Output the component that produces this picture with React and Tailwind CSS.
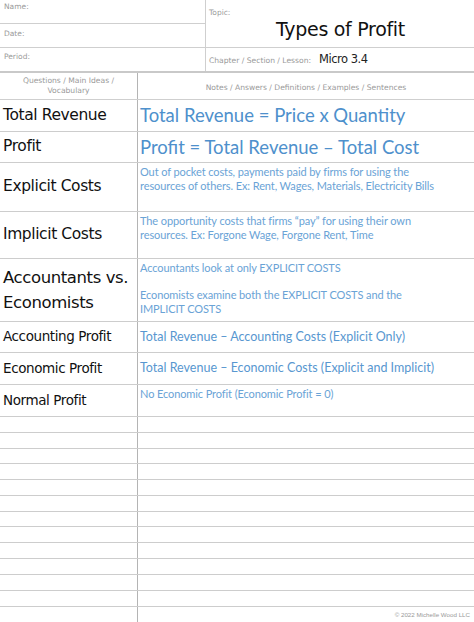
import React from 'react'

const gothic = "font-['DejaVu_Sans',sans-serif]"
const calibri = "font-['Lato','Open_Sans',sans-serif]"

const rows = [
  { h: 'h-[32px]', label: 'Total Revenue', labelSize: 'text-[15.5px]', body: ['Total Revenue = Price x Quantity'], kind: 'big' },
  { h: 'h-[31px]', label: 'Profit', labelSize: 'text-[15.5px]', body: ['Profit = Total Revenue – Total Cost'], kind: 'big' },
  {
    h: 'h-[49px]',
    label: 'Explicit Costs',
    labelSize: 'text-[15.5px]',
    body: ['Out of pocket costs, payments paid by firms for using the', 'resources of others. Ex: Rent, Wages, Materials, Electricity Bills'],
    kind: 'small',
  },
  {
    h: 'h-[47px]',
    label: 'Implicit Costs',
    labelSize: 'text-[15.5px]',
    body: ['The opportunity costs that firms “pay” for using their own', 'resources. Ex: Forgone Wage, Forgone Rent, Time'],
    kind: 'small',
  },
  {
    h: 'h-[63px]',
    label: ['Accountants vs.', 'Economists'],
    labelSize: 'text-[16.5px]',
    body: ['Accountants look at only EXPLICIT COSTS', '\u00a0', 'Economists examine both the EXPLICIT COSTS and the', 'IMPLICIT COSTS'],
    kind: 'small',
  },
  { h: 'h-[31px]', label: 'Accounting Profit', labelSize: 'text-[13.5px]', body: ['Total Revenue – Accounting Costs (Explicit Only)'], kind: 'mid' },
  { h: 'h-[32px]', label: 'Economic Profit', labelSize: 'text-[13.5px]', body: ['Total Revenue – Economic Costs (Explicit and Implicit)'], kind: 'mid' },
  { h: 'h-[32px]', label: 'Normal Profit', labelSize: 'text-[13.5px]', body: ['No Economic Profit (Economic Profit = 0)'], kind: 'small' },
]

// blank ruled lines under the notes, spacing is a hair under 16px
const blankRows = ['h-[16px]', 'h-[16px]', 'h-[15px]', 'h-[16px]', 'h-[16px]', 'h-[16px]', 'h-[15px]', 'h-[16px]', 'h-[16px]', 'h-[16px]', 'h-[16px]', 'h-[16px]']

function Body({ kind, lines }) {
  if (kind === 'big') {
    return <div className={`${calibri} text-[18.5px] text-[#4e90cc] px-[2px] self-center leading-none`}>{lines[0]}</div>
  }
  if (kind === 'mid') {
    return <div className={`${calibri} text-[12.5px] text-[#5897d0] px-[2px] self-center leading-none`}>{lines[0]}</div>
  }
  return (
    <div className={`${calibri} text-[11px] leading-[13.5px] text-[#6aa3d6] px-[2px] pt-[2px] tracking-[-0.1px]`}>
      {lines.map((l, i) => (
        <div key={i}>{l}</div>
      ))}
    </div>
  )
}

const App = () => {
  return (
    <div className={`w-[474px] h-[622px] bg-white overflow-hidden flex flex-col ${gothic}`}>
      {/* Header */}
      <div className="flex h-[73px] border-b-2 border-[#c9c9c9] shrink-0">
        <div className="w-[206px] flex flex-col border-r border-[#cfcfcf] text-[7.5px] text-[#9a9a9a]">
          <div className="h-[24px] border-b border-[#cfcfcf] px-[4px] pt-[1px]">Name:</div>
          <div className="h-[24px] border-b border-[#cfcfcf] px-[4px] pt-[4px]">Date:</div>
          <div className="flex-1 px-[4px] pt-[3px]">Period:</div>
        </div>
        <div className="flex-1 flex flex-col">
          <div className="h-[48px] border-b border-[#cfcfcf] flex">
            <div className="text-[7.5px] text-[#9a9a9a] pl-[3px] pt-[7px] w-[60px]">Topic:</div>
            <div className="text-[19px] text-[#111] pt-[15px] pl-[10px] tracking-[-0.3px]">Types of Profit</div>
          </div>
          <div className="flex-1 flex items-center px-[3px] gap-[8px]">
            <span className="text-[7.6px] text-[#9a9a9a] mt-[3px]">Chapter / Section / Lesson:</span>
            <span className="text-[11.5px] text-[#222] tracking-[-0.5px]">Micro 3.4</span>
          </div>
        </div>
      </div>

      {/* Column headings */}
      <div className="flex h-[27px] border-b border-[#cfcfcf] shrink-0 text-[7.6px] text-[#9a9a9a]">
        <div className="w-[138px] border-r border-[#b4b4b4] flex flex-col items-center justify-center leading-[10px] text-center">
          <div>Questions / Main Ideas /</div>
          <div>Vocabulary</div>
        </div>
        <div className="flex-1 flex items-center justify-center pt-[3px]">
          Notes / Answers / Definitions / Examples / Sentences
        </div>
      </div>

      {/* Content rows */}
      {rows.map((r, i) => (
        <div key={i} className={`flex ${r.h} border-b border-[#cdcdcd] shrink-0`}>
          <div
            className={`w-[138px] border-r border-[#b4b4b4] flex flex-col justify-center px-[3px] text-[#111] ${r.labelSize} tracking-[-0.4px] ${
              Array.isArray(r.label) ? 'leading-[25px]' : 'leading-none'
            }`}
          >
            {Array.isArray(r.label) ? r.label.map((t, j) => <div key={j}>{t}</div>) : r.label}
          </div>
          <div className="flex-1 flex">
            <Body kind={r.kind} lines={r.body} />
          </div>
        </div>
      ))}

      {/* Blank lined rows */}
      {blankRows.map((h, i) => (
        <div key={i} className={`flex ${h} border-b border-[#cdcdcd] shrink-0`}>
          <div className="w-[138px] border-r border-[#b4b4b4]" />
          <div className="flex-1" />
        </div>
      ))}

      {/* Footer */}
      <div className="flex flex-1">
        <div className="w-[138px] border-r border-[#b4b4b4]" />
        <div className="flex-1 flex items-center justify-end pr-[4px] text-[6.2px] text-[#9a9a9a] font-['Liberation_Sans',sans-serif]">
          © 2022 Michelle Wood LLC
        </div>
      </div>
    </div>
  )
}

export default App
